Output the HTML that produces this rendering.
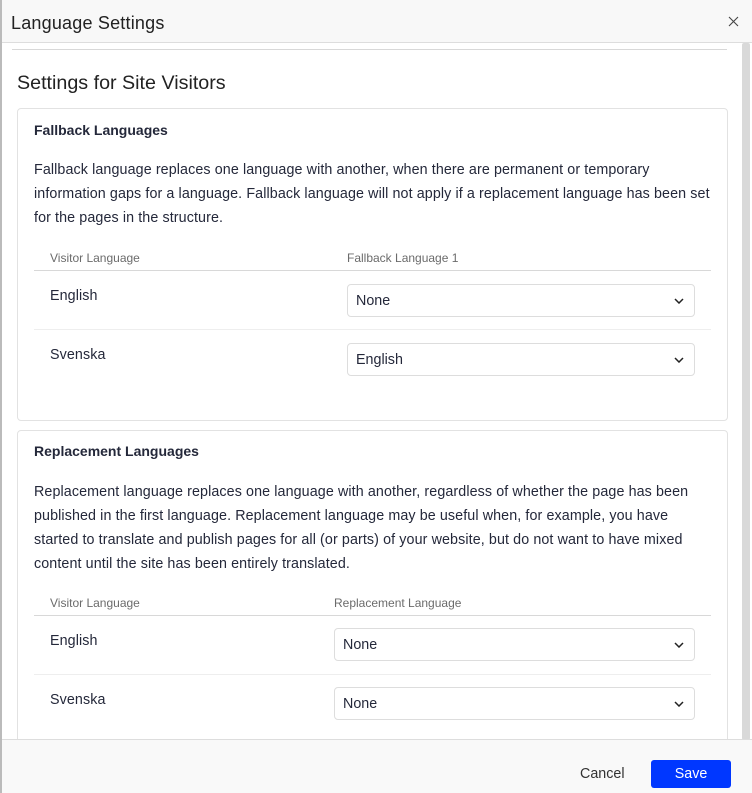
<!DOCTYPE html>
<html><head><meta charset="utf-8"><style>
*{margin:0;padding:0;box-sizing:border-box}
body{width:752px;height:793px;overflow:hidden;background:#fff;font-family:"Liberation Sans",sans-serif;color:#24283a;position:relative}
.a{position:absolute;white-space:nowrap}
.hdr{left:0;top:0;width:752px;height:43px;background:#f8f8f8;border-bottom:1px solid #ddd}
.card{position:absolute;left:17px;width:711px;border:1px solid #e2e2e2;border-radius:4px;background:#fff}
.p{font-size:14.3px;line-height:24px;letter-spacing:0.1px}
.th{font-size:12px;color:#6b6b6b}
.rule{position:absolute;height:1px;background:#d8d8d8}
.sel{position:absolute;border:1px solid #ddd;border-radius:4px;height:33px;font-size:14.3px;padding-left:8px;line-height:33px}
.sel svg{position:absolute;right:10px;top:13px}
</style></head><body>
<div class="a hdr"></div>
<div class="a" style="left:0;top:0;width:2px;height:793px;background:#bbb"></div>
<div class="a" style="left:11px;top:13px;font-size:18px;color:#222;letter-spacing:0.2px">Language Settings</div>
<svg class="a" style="left:728px;top:16px" width="11" height="11"><path d="M1 1L10 10M10 1L1 10" stroke="#444" stroke-width="1.1"/></svg>
<div class="a" style="left:742px;top:43px;width:8px;height:697px;background:#d9d9d9;border-radius:2px"></div>
<div class="rule" style="left:12px;top:49px;width:715px"></div>
<div class="a" style="left:17px;top:72px;font-size:19.7px;color:#222">Settings for Site Visitors</div>

<div class="card" style="top:108px;height:313px"></div>
<div class="a" style="left:34px;top:122px;font-size:14px;font-weight:bold">Fallback Languages</div>
<div class="a p" style="left:34px;top:158px">Fallback language replaces one language with another, when there are permanent or temporary<br>information gaps for a language. Fallback language will not apply if a replacement language has been set<br>for the pages in the structure.</div>
<div class="a th" style="left:50px;top:251px">Visitor Language</div>
<div class="a th" style="left:347px;top:251px">Fallback Language 1</div>
<div class="rule" style="left:34px;top:270px;width:677px"></div>
<div class="a p" style="left:50px;top:284px">English</div>
<div class="sel" style="left:347px;top:284px;width:348px">None<svg width="10" height="6"><path d="M1 1L5 5L9 1" fill="none" stroke="#222" stroke-width="1.5"/></svg></div>
<div class="rule" style="left:34px;top:329px;width:677px;background:#eee"></div>
<div class="a p" style="left:50px;top:343px">Svenska</div>
<div class="sel" style="left:347px;top:343px;width:348px">English<svg width="10" height="6"><path d="M1 1L5 5L9 1" fill="none" stroke="#222" stroke-width="1.5"/></svg></div>

<div class="card" style="top:430px;height:330px"></div>
<div class="a" style="left:34px;top:443px;font-size:14px;font-weight:bold">Replacement Languages</div>
<div class="a p" style="left:34px;top:480px">Replacement language replaces one language with another, regardless of whether the page has been<br>published in the first language. Replacement language may be useful when, for example, you have<br>started to translate and publish pages for all (or parts) of your website, but do not want to have mixed<br>content until the site has been entirely translated.</div>
<div class="a th" style="left:50px;top:596px">Visitor Language</div>
<div class="a th" style="left:334px;top:596px">Replacement Language</div>
<div class="rule" style="left:34px;top:615px;width:677px"></div>
<div class="a p" style="left:50px;top:629px">English</div>
<div class="sel" style="left:334px;top:628px;width:361px">None<svg width="10" height="6"><path d="M1 1L5 5L9 1" fill="none" stroke="#222" stroke-width="1.5"/></svg></div>
<div class="rule" style="left:34px;top:674px;width:677px;background:#eee"></div>
<div class="a p" style="left:50px;top:688px">Svenska</div>
<div class="sel" style="left:334px;top:687px;width:361px">None<svg width="10" height="6"><path d="M1 1L5 5L9 1" fill="none" stroke="#222" stroke-width="1.5"/></svg></div>

<div class="a" style="left:2px;top:739px;width:750px;height:54px;background:#f9f9f9;border-top:1px solid #ddd"></div>
<div class="a" style="left:580px;top:766px;font-size:14.3px;color:#333">Cancel</div>
<div class="a" style="left:651px;top:760px;width:80px;height:28px;background:#0037ff;border-radius:3px;color:#fff;font-size:14.3px;text-align:center;line-height:28px">Save</div>
</body></html>
